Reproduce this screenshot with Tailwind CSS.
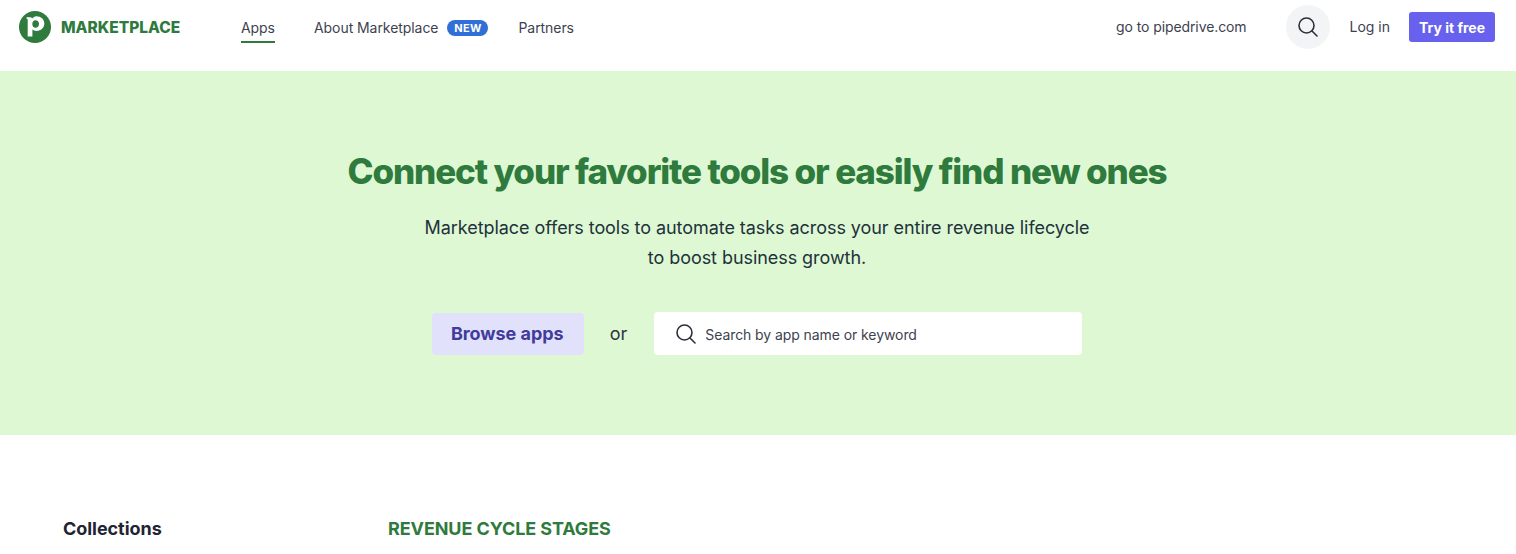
<!DOCTYPE html>
<html lang="en">
<head>
    <meta charset="UTF-8">
    <title>Marketplace</title>
    <script src="https://cdn.jsdelivr.net/npm/@tailwindcss/browser@4"></script>
</head>
<body class="bg-white font-['Inter',sans-serif] text-[#21232c] h-[554px] overflow-hidden">
    <!-- Header -->
    <header class="h-[71px] flex items-center pl-[19px] pr-[21px] pb-[17px] bg-white">
        <a href="#" class="flex items-center w-[222px]">
            <svg width="32" height="32" viewBox="0 0 32 32">
                <circle cx="16" cy="16" r="16" fill="#2f7a3d"/>
                <path fill-rule="evenodd" fill="#fff" d="M7.500 6.200H10.600C12 6.200 12.800 6.700 13.100 7.600C14.200 6.100 15.600 5.200 17.200 5.200C22 5.200 25.300 8.200 25.300 12.600C25.300 17 22 20 17.500 20C15.800 20 14.400 19.500 13.400 18.600V25.400H8.700V8.800C8.700 8 8.300 7.700 7.500 7.700ZM16.500 9.300C14.600 9.300 13.300 10.800 13.300 13C13.300 15.200 14.600 16.700 16.500 16.700C18.500 16.700 20 15.200 20 13C20 10.800 18.500 9.300 16.500 9.300Z"/>
            </svg>
            <span class="ml-[10px] mt-[1px] text-[15.500px] font-extrabold text-[#2f7a3d]">MARKETPLACE</span>
        </a>
        <nav class="flex items-center text-[14px] tracking-[-0.06px] text-[#3d4250]">
            <a href="#" class="h-[25px] mt-[7px] border-b-2 border-[#2f7a3d] leading-[20px]">Apps</a>
            <a href="#" class="ml-[39px] leading-[20px] mt-[2px]">About Marketplace</a>
            <span class="ml-[9px] mt-[2px] h-[16px] w-[41px] rounded-full bg-[#2f6fd6] text-white text-[11px] font-bold flex items-center justify-center tracking-[0.3px]">NEW</span>
            <a href="#" class="ml-[30px] leading-[20px] mt-[2px]">Partners</a>
        </nav>
        <div class="ml-auto flex items-center text-[14px] text-[#3d4250]">
            <a href="#" class="leading-[20px] tracking-[-0.1px]">go to pipedrive.com</a>
            <button class="ml-[39px] w-[44px] h-[44px] rounded-full bg-[#f3f4f6] flex items-center justify-center">
                <svg width="22" height="22" viewBox="0 0 22 22" fill="none" stroke="#2b303b" stroke-width="1.600" stroke-linecap="round">
                    <circle cx="9.500" cy="9.500" r="7.500"/>
                    <path d="M15 15l5 5"/>
                </svg>
            </button>
            <a href="#" class="ml-[20px] leading-[20px] -mt-[1px]">Log in</a>
            <a href="#" class="ml-[19px] w-[86px] h-[30px] rounded-[3px] bg-[#6861ed] text-white font-bold flex items-center justify-center">Try it free</a>
        </div>
    </header>

    <!-- Hero -->
    <section class="h-[364px] bg-[#def8d4] flex flex-col items-center pt-[78px] pr-[2px]">
        <h1 class="text-[35px] leading-[44px] font-extrabold text-[#2f7a3d] tracking-[-1.140px]">Connect your favorite tools or easily find new ones</h1>
        <p class="mt-[20px] text-[18px] leading-[30px] tracking-[-0.06px] text-[#21323a] text-center">Marketplace offers tools to automate tasks across your entire revenue lifecycle<br>to boost business growth.</p>
        <div class="mt-[39px] flex items-center">
            <a href="#" class="w-[152px] h-[42px] pr-[1px] rounded-[4px] bg-[#e2e1fc] text-[18px] font-bold tracking-[-0.05px] text-[#413b9c] flex items-center justify-center">Browse apps</a>
            <span class="ml-[26px] text-[18px] text-[#2b3640]">or</span>
            <div class="ml-[27px] w-[428px] h-[43px] rounded-[4px] bg-white flex items-center pl-[21px]">
                <svg width="22" height="22" viewBox="0 0 22 22" fill="none" stroke="#2b303b" stroke-width="1.600" stroke-linecap="round">
                    <circle cx="9.500" cy="9.500" r="7.500"/>
                    <path d="M15 15l5 5"/>
                </svg>
                <span class="ml-[8px] mt-[1px] text-[14px] tracking-[-0.08px] text-[#3d4250]">Search by app name or keyword</span>
            </div>
        </div>
    </section>

    <!-- Below the fold -->
    <section class="flex pl-[63px] pt-[82px]">
        <h2 class="w-[325px] text-[18px] leading-[24px] font-bold tracking-[-0.05px] text-[#1f2433]">Collections</h2>
        <h2 class="text-[18px] leading-[24px] font-bold tracking-[-0.1px] text-[#2f7a3d]">REVENUE CYCLE STAGES</h2>
    </section>
</body>
</html>
